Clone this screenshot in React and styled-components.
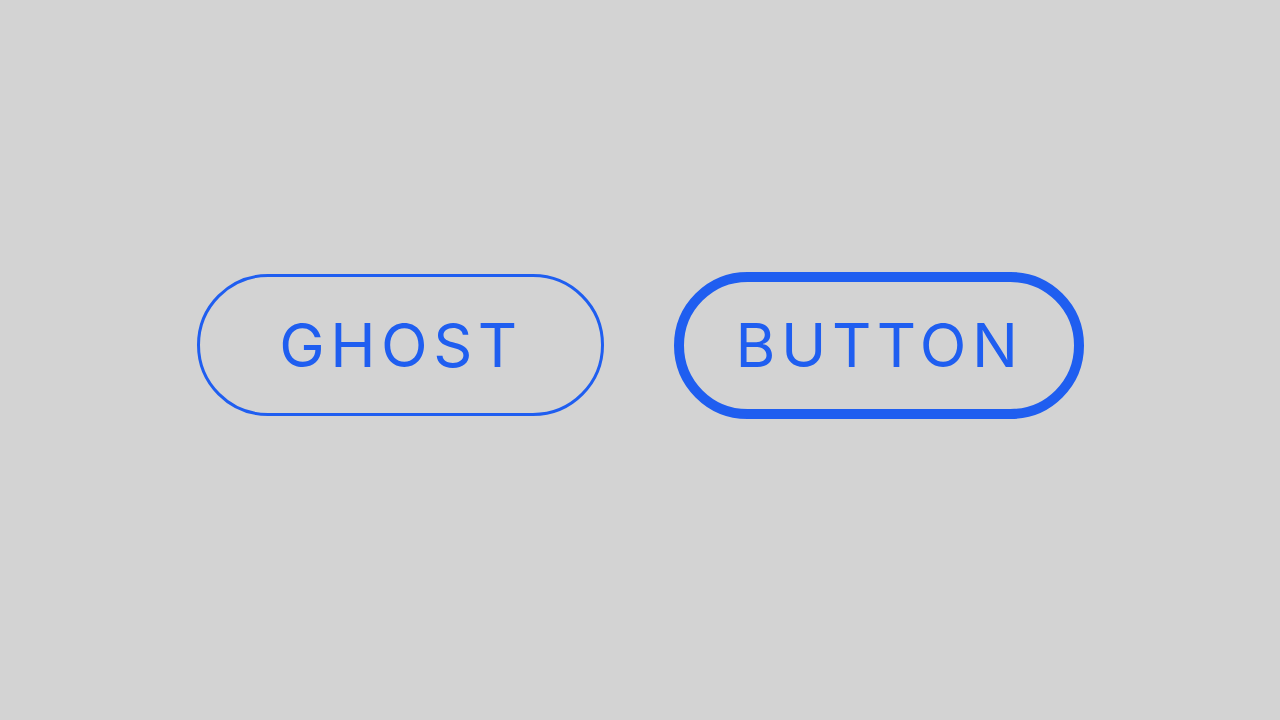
import React from 'react';
import styled, { createGlobalStyle } from 'styled-components';

const GlobalStyle = createGlobalStyle`
  html, body {
    margin: 0;
    padding: 0;
    background: #d3d3d3;
  }
`;

const Root = styled.div`
  height: 100vh;
  width: 100%;
  background: #d3d3d3;
  display: flex;
  align-items: center;
  justify-content: center;
  gap: 70px;
  padding-bottom: 30px;
  padding-left: 1px;
  box-sizing: border-box;
`;

const Button = styled.button`
  box-sizing: border-box;
  width: ${p => (p.$bold ? '410px' : '407px')};
  height: ${p => (p.$bold ? '147px' : '142px')};
  border: ${p => (p.$bold ? '10px' : '3px')} solid #1f5ef0;
  border-radius: 999px;
  background: transparent;
  color: #1f5ef0;
  font-family: Inter, "Liberation Sans", sans-serif;
  font-size: 61px;
  font-weight: 400;
  letter-spacing: 5.5px;
  text-indent: 1px;
  display: flex;
  align-items: center;
  justify-content: center;
  padding: 0;
  cursor: pointer;
`;

const App = () => {
  return (
    <>
      <GlobalStyle />
      <Root>
        <Button>GHOST</Button>
        <Button $bold>BUTTON</Button>
      </Root>
    </>
  );
};

export default App;
